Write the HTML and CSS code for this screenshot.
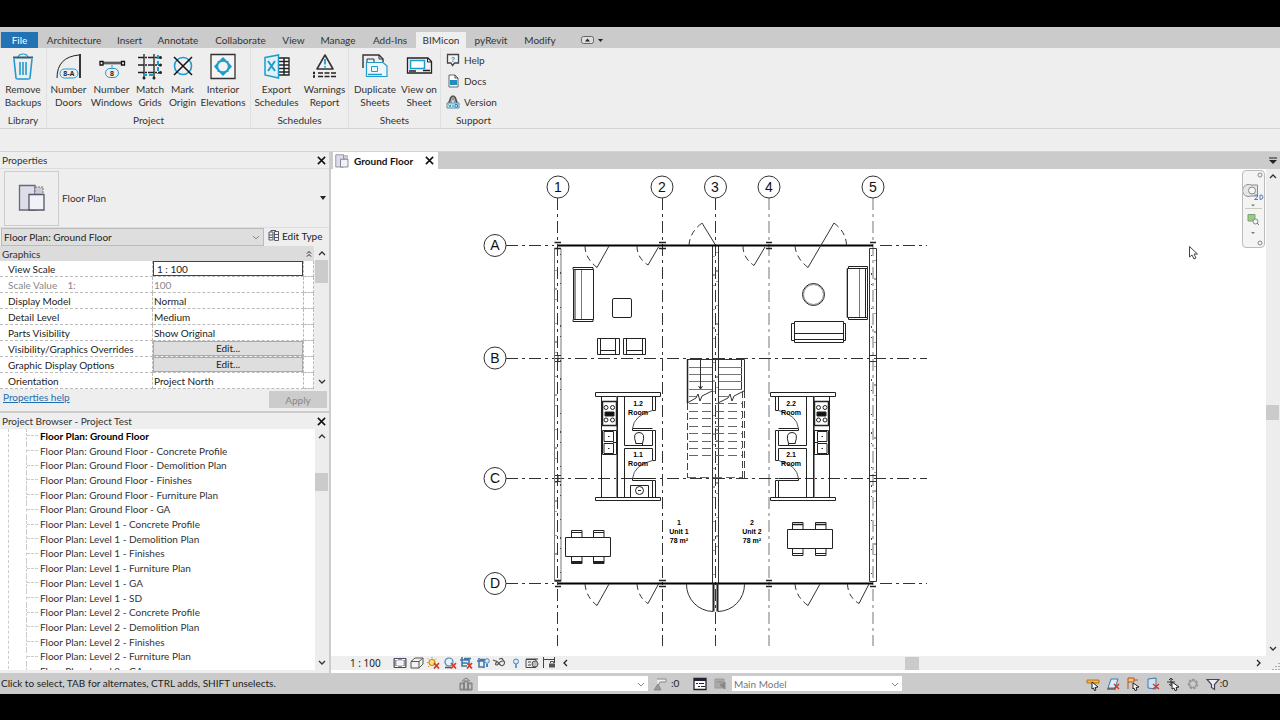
FILE: index.html
```html
<!DOCTYPE html>
<html lang="en">
<head>
<meta charset="utf-8">
<title>Floor Plan: Ground Floor</title>
<link rel="stylesheet" href="styles.css">
</head>
<body>
<svg class="defs" aria-hidden="true">
  <symbol id="up" viewBox="0 0 8 6"><path d="M1 5 4 2 7 5" fill="none" stroke="#333" stroke-width="1.3"/></symbol>
  <symbol id="down" viewBox="0 0 8 6"><path d="M1 1 4 4 7 1" fill="none" stroke="#333" stroke-width="1.3"/></symbol>
  <symbol id="chev" viewBox="0 0 8 6"><path d="M1 1 4 4 7 1" fill="none" stroke="#888"/></symbol>
  <symbol id="close" viewBox="0 0 10 10"><path d="M1 1 9 9M9 1 1 9" fill="none" stroke="#111" stroke-width="1.7"/></symbol>
  <symbol id="plan" viewBox="0 0 28 28"><path d="M1.500 1.500H17V26H1.500Z" fill="#dcdde8" stroke="#666a78" stroke-width="1.300"/><path d="M17 3H25V11H17Z" fill="#c9cbd8" stroke="#777" stroke-dasharray="2 1"/><path d="M11 10.500H26V26H11Z" fill="#f1f1f8" stroke="#555866" stroke-width="1.300"/></symbol>
</svg>
<div class="app">
  <nav class="tabs">
    <button class="tab file">File</button><button class="tab">Architecture</button><button class="tab">Insert</button><button class="tab">Annotate</button><button class="tab">Collaborate</button><button class="tab">View</button><button class="tab">Manage</button><button class="tab">Add-Ins</button><button class="tab active">BIMicon</button><button class="tab">pyRevit</button><button class="tab">Modify</button>
    <button class="tab" aria-label="Minimize ribbon"><svg width="24" height="8" viewBox="0 0 24 8"><rect x="1.500" y=".5" width="12" height="7" rx="2" fill="#ddd" stroke="#666"/><path d="M5 5.500 7.500 2.500 10 5.500Z" fill="#222"/><path d="M18 3H23L20.500 6Z" fill="#222"/></svg></button>
  </nav>
  <div class="ribbon">
    <section class="panel library">
      <div class="tools">
        <button class="tool"><svg viewBox="0 0 28 28"><g fill="none" stroke="#1e9bd0" stroke-width="1.600"><path d="M9 4Q10 1 14 1T19 4" stroke-width="1.200"/><path d="M5 6 7 25Q7 26 9 26H19Q21 26 21 25L23 6"/><path d="M11 9V22M14 9V22M17 9V22"/></g><path d="M4 4.500H24" stroke="#2b5f78" stroke-width="2"/></svg><span>Remove<br>Backups</span></button>
      </div>
      <h2>Library</h2>
    </section>
    <section class="panel project">
      <div class="tools">
        <button class="tool"><svg viewBox="0 0 28 28"><path d="M2 25Q2 4 24 2" fill="none" stroke="#222"/><path d="M25 1V25" stroke="#222" stroke-width="1.800"/><rect x="5" y="16" width="18" height="9" rx="4.500" fill="#eee" stroke="#1e9bd0"/><text x="14" y="23" class="badge">8-A</text></svg><span>Number<br>Doors</span></button>
        <button class="tool"><svg viewBox="0 0 28 28"><path d="M3 10H26" stroke="#222" stroke-width="2.500"/><path d="M5 10H24" stroke="#999"/><path d="M2 8.500H5V12H2ZM23.500 8.500H26.500V12H23.500Z" fill="#fff" stroke="#111" stroke-width="1.300"/><path d="M14 12V16" stroke="#1e9bd0"/><rect x="7.500" y="15.500" width="13" height="9" rx="4.500" fill="#eee" stroke="#1e9bd0"/><text x="14" y="22.500" class="badge">8</text></svg><span>Number<br>Windows</span></button>
        <button class="tool"><svg viewBox="0 0 28 28"><path d="M2 4.500H25M2 12H25M2 19.500H25" stroke="#222" stroke-width="1.300" stroke-dasharray="6 1 2 1"/><path d="M8 1V26M18 1V26" stroke="#222" stroke-width="1.300"/><path d="M22 2V21M7 22H19" stroke="#1e9bd0" stroke-width="2" stroke-dasharray="4 2"/><g fill="#222"><circle cx="24.500" cy="4.500" r="1.500"/><circle cx="24.500" cy="12" r="1.500"/><circle cx="24.500" cy="19.500" r="1.500"/><circle cx="8" cy="25" r="1.500"/><circle cx="18" cy="25" r="1.500"/></g></svg><span>Match<br>Grids</span></button>
        <button class="tool"><svg viewBox="0 0 28 28"><circle cx="14" cy="13" r="8.500" fill="none" stroke="#1e9bd0" stroke-width="1.600"/><path d="M5 4 23 22M23 4 5 22" stroke="#111" stroke-width="1.500"/></svg><span>Mark<br>Origin</span></button>
        <button class="tool"><svg viewBox="0 0 28 28"><path d="M2 1.500H26V25.500H2Z" fill="#f5f5f5" stroke="#333" stroke-width="1.300"/><path d="M14 4 18 8H19.500V9.500L23 13.500 19.500 17.500V19H18L14 23 10 19H8.500V17.500L5 13.500 8.500 9.500V8H10Z" fill="#1e9bd0"/><circle cx="14" cy="13.500" r="4.800" fill="#f2f2f2"/></svg><span>Interior<br>Elevations</span></button>
      </div>
      <h2>Project</h2>
    </section>
    <section class="panel schedules">
      <div class="tools">
        <button class="tool"><svg viewBox="0 0 28 28"><path d="M16 5H26V22H16" fill="#fff" stroke="#222" stroke-width="1.300"/><path d="M16 8.500H26M16 12H26M16 15.500H26M16 19H26M21 5V22" stroke="#222" stroke-width="1.500"/><path d="M2 4.500 15.500 2V25L2 22Z" fill="#e2f1f8" stroke="#1e9bd0" stroke-width="1.500"/><path d="M5 8 12 18M12 8 5 18" stroke="#1e9bd0" stroke-width="2"/></svg><span>Export<br>Schedules</span></button>
        <button class="tool"><svg viewBox="0 0 28 28"><path d="M14 2 22 16H6Z" fill="#f3f3f3" stroke="#333" stroke-width="1.600" stroke-linejoin="round"/><path d="M14 6V11.500M14 13V14.500" stroke="#1e9bd0" stroke-width="1.800"/><path d="M2 20H4M2 23.500H4" stroke="#222" stroke-width="2.500"/><path d="M7 20H26M7 23.500H26" stroke="#222" stroke-width="1.400" stroke-dasharray="5 1.500"/></svg><span>Warnings<br>Report</span></button>
      </div>
      <h2>Schedules</h2>
    </section>
    <section class="panel sheets">
      <div class="tools">
        <button class="tool"><svg viewBox="0 0 28 28"><path d="M2 15V2H18L22 6V9" fill="none" stroke="#333" stroke-width="1.400"/><path d="M18 2V6H22M6 9V6H13V9" fill="none" stroke="#333"/><path d="M5.500 9.500H22L26 13V23.500H5.500Z" fill="#edf7fb" stroke="#1e9bd0" stroke-width="1.200"/><path d="M10.500 13.500H16.500V18.500H10.500Z" fill="none" stroke="#1e9bd0"/><path d="M7 21.500H21" stroke="#1e9bd0" stroke-width="1.500"/></svg><span>Duplicate<br>Sheets</span></button>
        <button class="tool"><svg viewBox="0 0 28 28"><path d="M2.500 5H23L26.500 8.500V20H2.500Z" fill="#f2f2f2" stroke="#222" stroke-width="1.300"/><path d="M22.500 5V9H26.500" fill="none" stroke="#222"/><path d="M5.500 7.500H19.500V15.500H5.500Z" fill="#fff" stroke="#1e9bd0" stroke-width="1.500"/><path d="M4 18H11M18 17.500H25" stroke="#222" stroke-width="1.400"/></svg><span>View on<br>Sheet</span></button>
      </div>
      <h2>Sheets</h2>
    </section>
    <section class="panel support">
      <div class="links">
        <button class="mini"><svg viewBox="0 0 14 14"><path d="M1.500 1.500H12.500V10H8.500L6.500 12.500 5 10H1.500Z" fill="#f5f5f5" stroke="#444" stroke-width="1.300"/><text x="7" y="8.500" class="q">?</text></svg>Help</button>
        <button class="mini"><svg viewBox="0 0 14 14"><path d="M3 1H9L12 4V13H3Z" fill="#fff" stroke="#666"/><path d="M4 6H11V11H4Z" fill="#1e8fc0"/><path d="M9 1V4H12" fill="none" stroke="#444"/></svg>Docs</button>
        <button class="mini"><svg viewBox="0 0 14 14"><path d="M3 8 5 2.500Q7 0 9 2.500L11 8" fill="none" stroke="#555" stroke-width="2"/><path d="M5 8 7 3 9 8" fill="none" stroke="#888"/><path d="M1 8H13V13H1Z" fill="#dcebf2" stroke="#5c8ca3"/><path d="M2.500 9.500 4 12 5 9.500M7 9.500V12M9 9.500H11.500V12H9Z" fill="none" stroke="#1e8fc0"/></svg>Version</button>
      </div>
      <h2>Support</h2>
    </section>
  </div>
  <div class="options"></div>
  <main class="work">
    <aside class="side">
      <section class="props">
        <header class="bar"><h3>Properties</h3><button class="x" aria-label="Close Properties"><svg width="9" height="9"><use href="#close"/></svg></button></header>
        <button class="type"><span class="thumb"><svg width="28" height="28"><use href="#plan"/></svg></span><span class="name">Floor Plan</span><svg width="6" height="4"><path d="M0 0H6L3 4Z" fill="#222"/></svg></button>
        <div class="instance">
          <div class="combo"><select aria-label="View instance"><option>Floor Plan: Ground Floor</option></select><svg width="8" height="6"><use href="#chev"/></svg></div>
          <button class="edit"><svg width="12" height="12" viewBox="0 0 12 12"><path d="M1 2H5V10H1ZM1 5H5M1 7.500H5M6.500 1.500H10.500V10.500H6.500ZM6.500 4.500H10.500M6.500 7.500H10.500M3 2V.5H8" fill="#f4f4fa" stroke="#555866"/></svg>Edit Type</button>
        </div>
        <div class="scroller">
          <div class="grid">
            <div class="group">Graphics<svg width="6" height="8"><path d="M1 3.500 3 1.500 5 3.500M1 6.500 3 4.500 5 6.500" fill="none" stroke="#222"/></svg></div>
            <table>
              <tr><th><label for="scale">View Scale</label></th><td class="field"><input id="scale" value="1 : 100"></td><td></td></tr>
              <tr class="dim"><th>Scale Value &nbsp;&nbsp; 1:</th><td>100</td><td></td></tr>
              <tr><th>Display Model</th><td>Normal</td><td></td></tr>
              <tr><th>Detail Level</th><td>Medium</td><td></td></tr>
              <tr><th>Parts Visibility</th><td>Show Original</td><td></td></tr>
              <tr><th>Visibility/Graphics Overrides</th><td class="field"><button>Edit...</button></td><td></td></tr>
              <tr><th>Graphic Display Options</th><td class="field"><button>Edit...</button></td><td></td></tr>
              <tr><th>Orientation</th><td>Project North</td><td></td></tr>
            </table>
          </div>
          <div class="vscroll p"><button aria-label="Scroll up"><svg width="8" height="6"><use href="#up"/></svg></button><i class="before"></i><i class="knob"></i><i class="after"></i><button aria-label="Scroll down"><svg width="8" height="6"><use href="#down"/></svg></button></div>
        </div>
        <footer class="foot"><a href="#help">Properties help</a><button disabled>Apply</button></footer>
      </section>
      <section class="browser">
        <header class="bar"><h3>Project Browser - Project Test</h3><button class="x" aria-label="Close Project Browser"><svg width="9" height="9"><use href="#close"/></svg></button></header>
        <div class="scroller">
          <div class="tree">
            <ul>
              <li class="current">Floor Plan: Ground Floor</li>
              <li>Floor Plan: Ground Floor - Concrete Profile</li>
              <li>Floor Plan: Ground Floor - Demolition Plan</li>
              <li>Floor Plan: Ground Floor - Finishes</li>
              <li>Floor Plan: Ground Floor - Furniture Plan</li>
              <li>Floor Plan: Ground Floor - GA</li>
              <li>Floor Plan: Level 1 - Concrete Profile</li>
              <li>Floor Plan: Level 1 - Demolition Plan</li>
              <li>Floor Plan: Level 1 - Finishes</li>
              <li>Floor Plan: Level 1 - Furniture Plan</li>
              <li>Floor Plan: Level 1 - GA</li>
              <li>Floor Plan: Level 1 - SD</li>
              <li>Floor Plan: Level 2 - Concrete Profile</li>
              <li>Floor Plan: Level 2 - Demolition Plan</li>
              <li>Floor Plan: Level 2 - Finishes</li>
              <li>Floor Plan: Level 2 - Furniture Plan</li>
              <li>Floor Plan: Level 2 - GA</li>
            </ul>
          </div>
          <div class="vscroll b"><button aria-label="Scroll up"><svg width="8" height="6"><use href="#up"/></svg></button><i class="before"></i><i class="knob"></i><i class="after"></i><button aria-label="Scroll down"><svg width="8" height="6"><use href="#down"/></svg></button></div>
        </div>
      </section>
    </aside>
    <section class="view">
      <div class="docs">
        <div class="doc"><svg width="14" height="14"><use href="#plan"/></svg><span>Ground Floor</span><button class="x" aria-label="Close view"><svg width="9" height="9"><use href="#close"/></svg></button></div>
        <button class="more" aria-label="View list"><svg width="8" height="8"><path d="M0 1H8" stroke="#222"/><path d="M0 3H8L4 7Z" fill="#222"/></svg></button>
      </div>
      <div class="stage">
        <div class="canvas">
          <svg class="drawing" viewBox="331 169 935 487" role="img" aria-label="Ground floor plan">
            <defs>
              <g id="chair"><path d="M.5 7V.5H11V7M.5 2.500H11"/></g>
              <g id="core">
                <path d="M595.500 392.500H660.500V396.500H595.500ZM595.500 497.500H660.500V500.500H595.500Z"/>
                <path d="M601.500 396.500V497.500M617.500 396.500V497.500"/><path d="M616.500 396.500V497.500" stroke="#888"/>
                <path d="M602.500 401.500H616.500V425.500H602.500Z" stroke-width="1.500"/>
                <circle cx="606" cy="407.500" r="2"/><circle cx="612.500" cy="407.500" r="2"/><circle cx="606" cy="420" r="2"/><circle cx="612.500" cy="420" r="2"/>
                <path d="M605 412H614V416H605Z" fill="#111"/>
                <path d="M602.500 430.500H616.500V454.500H602.500ZM604 431.500H613.500V441.500H604ZM604 443.500H613.500V453.500H604Z"/><path d="M608 436.500H609.500M608 448.500H609.500M613 442.500H616"/>
                <path d="M624.500 396.500V445.500H652.500V430.500H655.500V460.500H652.500V448.500H624.500V497.500M652.500 396.500V410.500H655.500V396.500M652.500 497.500V480.500H655.500V497.500"/>
                <path d="M652.500 428.500H632.500V430.500H652.500M652.500 478.500H632.500V480.500H652.500"/>
                <path d="M632.500 428.500Q634 415 652.500 410.500M632.500 478.500Q634 465 652.500 460.500" stroke="#555"/>
                <path d="M636 443.500Q632 432.500 639 432.500T642.500 443.500ZM635.500 443.500H642.500V445.500"/>
              </g>
            </defs>
            <g class="grid-lines">
              <path d="M557.500 198V646M662.500 198V646M715.500 198V646"/><path d="M769 198V646M873 198V646" class="soft"/>
              <path d="M506 245.500H554M880 245.500H927M506 358.500H927M506 478.500H927M506 583.500H554M880 583.500H927"/>
            </g>
            <g class="bubbles">
              <circle cx="558" cy="187" r="11"/><circle cx="662" cy="187" r="11"/><circle cx="715.500" cy="187" r="11"/><circle cx="769" cy="187" r="11"/><circle cx="873" cy="187" r="11"/>
              <circle cx="495" cy="245.500" r="11"/><circle cx="495" cy="358" r="11"/><circle cx="495" cy="478.500" r="11"/><circle cx="495" cy="583.500" r="11"/>
            </g>
            <g class="tags">
              <text x="558" y="192">1</text><text x="662" y="192">2</text><text x="715" y="192">3</text><text x="769" y="192">4</text><text x="873" y="192">5</text>
              <text x="495" y="250">A</text><text x="495" y="363">B</text><text x="495" y="483">C</text><text x="495" y="588">D</text>
            </g>
            <g class="lines">
              <g stroke="#777"><path d="M554.500 248.500H561V581.500H554.500Z"/></g>
              <path d="M712.500 246V583M718.500 246V583M869.500 248.500H876.500V581.500H869.500Z" stroke="#333"/>
              <path d="M556 270V560M560.500 254V575M714 256V575M717 252V570M871.500 255V575M875 260V570" stroke="#444" stroke-dasharray="1 17 2 9 1 23"/>
              <path d="M558 245.500H873M558 583.500H873" stroke="#000" stroke-width="2"/>
              <path d="M554.500 242.500H561M554.500 248.500H561M659 242.500H666M659 248.500H666M766 242.500H772M766 248.500H772M870 242.500H876M555 586.500H561M659 586.500H666M766 586.500H772M870 586.500H876M555 580.500H561M659 580.500H666M766 580.500H772" stroke-width="1.300"/>
              <path d="M555 355.500H561M555 361.500H561M558 355V362M555 475.500H561M555 481.500H561M558 475V482M870 355.500H876M870 361.500H876M870 475.500H876M870 481.500H876" stroke="#333"/>
              <g stroke="#333"><path d="M597 267.500 609 246M648 265 658.500 247M702 223 715.500 245M754 265.500 765 247M808 267.500 834 223M597 605.500 609 584M648 603.500 658.500 584M808 605.500 820 584M859 603.500 869 584"/>
              <path d="M585 246Q585 258 597 267.500M637 246Q637 258 648 265M689 245Q690 232 702 223M743 246Q743 258 754 265.500M795 246Q796 258 808 267.500M834 223Q846 232 846.500 245M585 584Q586 597 597 605.500M637 584Q638 597 648 603.500M795 584Q796 597 808 605.500M847.500 584Q848 597 859 603.500" stroke-dasharray="6 4"/>
              <path d="M686.500 584A27 27 0 0 0 713 611.500M744.500 584A27 27 0 0 1 718 611.500"/></g>
              <path d="M713.500 583V611.500M717.500 583V611.500" stroke-width="2"/>
              <path d="M573.500 269.500H593.500V319.500H573.500ZM573 269.500V267.500H593V269.500M573 319.500V321.500H593V319.500M575 270V319"/><path d="M581.500 270V319M847 268.500V317.500" stroke="#777"/>
              <rect x="612.500" y="298.500" width="19" height="19" rx="1.500"/>
              <path d="M597.500 338.500H619.500V354.500H597.500ZM600.500 338.500V354M615.500 338.500V354M600.500 350.500H615.500M623.500 338.500H645.500V354.500H623.500ZM626.500 338.500V354M642.500 338.500V354M626.500 350.500H642.500"/>
              <circle cx="813.500" cy="294.500" r="11"/><circle cx="813.500" cy="294.500" r="10" stroke="#888"/>
              <path d="M847.500 268.500H867.500V317.500H847.500ZM848.500 268.500V266.500H867.500V268.500M848.500 317.500V319.500H867.500V317.500M865.500 269V317"/><path d="M859.500 269V317" stroke="#777"/>
              <path d="M794.500 321.500H843.500V342.500H794.500ZM794.500 323.500H791.500V340.500H794.500M843.500 323.500H845.500V340.500H843.500M794 333.500H843M794 339.500H843"/>
              <path d="M565.500 537.500H610.500V556.500H565.500ZM787.500 529.500H832.500V548.500H787.500Z"/>
              <use href="#chair" x="571" y="530"/><use href="#chair" x="593" y="530"/><use href="#chair" x="792" y="522"/><use href="#chair" x="815" y="522"/>
              <use href="#chair" transform="translate(571 564) scale(1 -1)"/><use href="#chair" transform="translate(593 564) scale(1 -1)"/><use href="#chair" transform="translate(792 556) scale(1 -1)"/><use href="#chair" transform="translate(815 556) scale(1 -1)"/>
              <path d="M571 562.500H582M593 562.500H604M792 524.500H803M815 524.500H826" stroke-width="1.500"/>
              <path d="M687.500 403V359.500H744.500V391M741.500 359.500V390" stroke="#333"/><path d="M687.500 359V403" stroke-width="1.500"/>
              <path d="M689 367.500H712M689 374.500H712M689 381.500H712M689 389.500H712M689 396.500H697M719 367.500H742M719 374.500H742M719 381.500H742M719 389.500H742M719 396.500H728" stroke="#777"/>
              <path d="M688 402.500 696 398 698 394 700 401 702 396 712 391M719 402.500 728 398 730 394 732 401 734 396 744 391M700.500 360V389M698.500 386 700.500 389 702.500 386" stroke="#333"/>
              <path d="M689 403.500H742M689 411.500H742M689 418.500H742M689 426.500H742M689 433.500H742M689 441.500H742M689 448.500H742M689 455.500H742M687 477.500H742" stroke="#666" stroke-dasharray="9 4"/>
              <path d="M687.500 403V478M742.500 391V478M744.500 391V478" stroke="#444" stroke-dasharray="7 3"/>
              <use href="#core"/><use href="#core" transform="translate(1431 0) scale(-1 1)"/>
              <path d="M630.500 485.500H648.500V497.500H630.500Z"/><circle cx="639.500" cy="490.500" r="4"/><path d="M638 490.500H641"/>
            </g>
            <g class="rooms">
              <text x="638" y="406">1.2</text><text x="638" y="415">Room</text><text x="638" y="457">1.1</text><text x="638" y="466">Room</text>
              <text x="791" y="406">2.2</text><text x="791" y="415">Room</text><text x="791" y="457">2.1</text><text x="791" y="466">Room</text>
              <text x="679" y="525">1</text><text x="679" y="534">Unit 1</text><text x="679" y="543">78 m²</text>
              <text x="752" y="525">2</text><text x="752" y="534">Unit 2</text><text x="752" y="543">78 m²</text>
            </g>
            <path d="M1189.500 246.500V257L1192 255 1194 259 1196 258 1194 254H1197.500Z" fill="#fff" stroke="#444"/>
          </svg>
          <div class="navbar">
            <svg width="21" height="76" viewBox="1 1 21 76"><g fill="none" stroke="#8a8a8a"><circle cx="18" cy="5" r="2"/><circle cx="18" cy="73" r="2"/><path d="M15.500 26H9A6 6 0 1 1 9 15H15.500Z" fill="#e4e6ec"/><circle cx="10" cy="20.500" r="3.500" fill="#f5f5f5"/></g><path d="M3 38.500H20" stroke="#ccb"/><path d="M12.500 25H15.500V27L12.500 29.500H16M18 25V29.500Q21 29.500 21 27T18 25" fill="none" stroke="#5b7fb0"/><path d="M9 34.500H13L11 36.500ZM9 62H13L11 64Z" fill="#777"/><path d="M6 44.500H13V51H6Z" fill="#9cc78d" stroke="#7ba66f"/><circle cx="13.500" cy="51.500" r="2.500" fill="#f4f4f4" stroke="#888"/><path d="M15 53 17 55" stroke="#777"/></svg>
          </div>
        </div>
        <div class="vscroll v"><button aria-label="Scroll up"><svg width="8" height="6"><use href="#up"/></svg></button><i class="before"></i><i class="knob"></i><i class="after"></i><button aria-label="Scroll down"><svg width="8" height="6"><use href="#down"/></svg></button></div>
      </div>
      <div class="controls">
        <button class="scale">1 : 100</button>
        <div class="modes">
        <button aria-label="Detail level"><svg viewBox="0 0 14 12"><path d="M1 1.500H13V10.500H1Z" fill="#9a9a9a" stroke="#444a66"/><path d="M4 4H10V8H4ZM2 2.500H5M9 2.500H12M2 9.500H5M9 9.500H12" fill="#eee" stroke="#fff"/></svg></button>
        <button aria-label="Visual style"><svg viewBox="0 0 14 12"><path d="M1 4.500H9V11H1ZM1 4.500 5 1H13V7L9 11M9 4.500 13 1" fill="#f2f2f2" stroke="#555"/></svg></button>
        <button aria-label="Sun path"><svg viewBox="0 0 14 12"><circle cx="6" cy="5.500" r="3" fill="#ffe27a" stroke="#c98a1e" stroke-width="1.200"/><path d="M6 0V1.500M1 5.500H2M2 1.500 3 2.500M10 1.500 9 2.500M2 10 3 9" stroke="#c98a1e"/><path d="M8 6 13 11.500M13 6 8 11.500" stroke="#d03a2a" stroke-width="1.700"/></svg></button>
        <button aria-label="Shadows"><svg viewBox="0 0 14 12"><circle cx="6" cy="5" r="4" fill="#e6f0f8" stroke="#4a84b8" stroke-width="1.200"/><path d="M2 10.500H8" stroke="#555" stroke-width="1.500"/><path d="M8 6 13 11.500M13 6 8 11.500" stroke="#d03a2a" stroke-width="1.700"/></svg></button>
        <button aria-label="Crop view"><svg viewBox="0 0 14 12"><path d="M3 0V9H8M1 3H10V8M5 1.500H12M3 6H8" fill="none" stroke="#3f76a8" stroke-width="1.600"/><path d="M8 6 13 11.500M13 6 8 11.500" stroke="#d03a2a" stroke-width="1.700"/></svg></button>
        <button aria-label="Show crop region"><svg viewBox="0 0 14 12"><path d="M3 1V10H8M1 4H8V11M4 2.500H9" fill="none" stroke="#3f76a8" stroke-width="1.500"/><circle cx="11" cy="4" r="2.300" fill="#d8ecfa" stroke="#4a84b8"/><path d="M11 7V10" stroke="#4a84b8" stroke-width="2"/></svg></button>
        <button aria-label="Temporary hide"><svg viewBox="0 0 14 12"><path d="M1 3 5 4.500M5 8Q2 8 5 4.500 8 6 5 8M7 6 9 8.500Q12 9 12.500 6T9 4.500 8.500 8M12.500 5 10 1.500 7 2" fill="none" stroke="#555" stroke-width="1.200"/></svg></button>
        <button aria-label="Reveal hidden"><svg viewBox="0 0 14 12"><circle cx="7" cy="4.500" r="2.500" fill="#d8ecfa" stroke="#4a84b8"/><path d="M6 8H8M6 10H8" stroke="#4a84b8" stroke-width="1.500"/></svg></button>
        <button aria-label="Temporary view properties"><svg viewBox="0 0 14 12"><path d="M1 2.500H11V10.500H1ZM1 2H13" fill="#eee" stroke="#444"/><path d="M3 5H6M3 8H6" stroke="#444"/><circle cx="10" cy="7" r="3" fill="#bbb" stroke="#555"/></svg></button>
        <button aria-label="Reveal constraints"><svg viewBox="0 0 14 12"><path d="M1 2.500H13M1.500 0V11M12.500 0V6" stroke="#444"/><path d="M7 6.500H13V10.500H7Z" fill="#555"/><path d="M8.500 6V4.500H11.500V6" fill="none" stroke="#555"/></svg></button>
        <button aria-label="Scroll left"><svg viewBox="0 0 14 12"><path d="M9 3 6 6 9 9" fill="none" stroke="#222" stroke-width="1.300"/></svg></button>
        </div>
        <div class="hscroll"><i class="before"></i><i class="knob"></i><i class="after"></i></div>
        <button aria-label="Scroll right"><svg viewBox="0 0 14 12"><path d="M5 3 8 6 5 9" fill="none" stroke="#222" stroke-width="1.300"/></svg></button>
        <svg class="grip" viewBox="0 0 8 8"><path d="M7 1V2M7 4V5M7 7V8M4 4V5M4 7V8M1 7V8" stroke="#999" stroke-width="1.500"/></svg>
      </div>
    </section>
  </main>
  <footer class="status">
    <p>Click to select, TAB for alternates, CTRL adds, SHIFT unselects.</p>
    <svg class="ic" viewBox="0 0 14 14"><path d="M1 6H5V13H1ZM5 4H9V13H5ZM9 6H13V13H9Z" fill="#aaa" stroke="#777"/><path d="M3 4 7 1 11 4" fill="none" stroke="#777"/><path d="M3 8V11M7 6V11M11 8V11" stroke="#ddd"/></svg>
    <div class="combo"><select aria-label="Active workset"><option></option></select><svg width="8" height="6"><use href="#chev"/></svg></div>
    <svg class="ic" viewBox="0 0 14 14"><path d="M4 2H13V5H7L5 9" fill="#eee" stroke="#888"/><path d="M1 13 5 7 8 13Z" fill="#999" stroke="#888"/></svg>
    <span class="zero">:0</span>
    <svg class="ic" viewBox="0 0 14 14"><path d="M1 1.500H13V12.500H1Z" fill="#fff" stroke="#223" stroke-width="1.300"/><path d="M1 3H13" stroke="#223" stroke-width="2"/><path d="M3 6.500H5M6 6.500H11M5 9.500H7M8 9.500H12" stroke="#223"/></svg>
    <svg class="ic s4" viewBox="0 0 14 14"><path d="M2 2H11V11H2Z" fill="#aaa" stroke="#999"/><path d="M4 5H9M7 8 12 12V5Z" fill="#888" stroke="#888"/></svg>
    <div class="combo"><select aria-label="Design option"><option>Main Model</option></select><svg width="8" height="6"><use href="#chev"/></svg></div>
    <div class="sel">
      <svg class="ic" viewBox="0 0 14 14"><path d="M1 3H13V6H1Z" fill="#f3b73a" stroke="#b87412"/><path d="M6 5 12 10 9 10.500 10 13 8.500 13.500 7.500 11 6 12Z" fill="#fff" stroke="#222"/></svg>
      <svg class="ic" viewBox="0 0 14 14"><path d="M2 11 5 2H12L9 11Z" fill="#dbeaf5" stroke="#3d78a8"/><path d="M1 12H10" stroke="#333"/><path d="M8 7 13 12M13 7 8 12" stroke="#d03a2a" stroke-width="1.500"/></svg>
      <svg class="ic" viewBox="0 0 14 14"><path d="M2 1H8V5H2ZM2 5V12M8 3H12" fill="#f6c27a" stroke="#b0571a"/><path d="M7 6 13 10 10 10.500 11 13 9 13.500 8 11 7 12Z" fill="#fff" stroke="#222"/></svg>
      <svg class="ic" viewBox="0 0 14 14"><path d="M2 2 10 1V12L2 11Z" fill="#cfe3f2" stroke="#3d78a8"/><path d="M7 7 13 12M13 7 7 12" stroke="#d03a2a" stroke-width="1.500"/></svg>
      <svg class="ic" viewBox="0 0 14 14"><path d="M5 1V9M1 5H9M3 3 5 1 7 3M3 7 5 9" fill="none" stroke="#333"/><path d="M6 5 13 10 10 10.500 11 13 9 13.500 8 11 6 12Z" fill="#fff" stroke="#222"/></svg>
      <svg class="ic" viewBox="0 0 14 14"><circle cx="7" cy="7" r="4" fill="#ccc" stroke="#999" stroke-width="2.500" stroke-dasharray="2.500 1"/><circle cx="7" cy="7" r="3.500" fill="none" stroke="#999"/></svg>
      <svg class="ic" viewBox="0 0 14 14"><path d="M1 2.500H13L8.500 7.500V12.500L5.500 10.500V7.500Z" fill="#e9eef4" stroke="#445" stroke-width="1.200"/></svg>
    </div>
    <span>:0</span>
  </footer>
</div>
</body>
</html>
```
FILE: styles.css
```css
:root {
  --ui: Lato, "Open Sans", sans-serif;
  --chrome: #eeeeee;
  --bar: #cbcbcb;
}
* { box-sizing: border-box; }
body {
  margin: 0;
  min-height: 100vh;
  padding: 27px 0;
  background: #000;
  color: #333;
  font: 10px/14px var(--ui);
  display: flex;
}
button, input, select {
  font: inherit;
  color: inherit;
  border: 0;
  margin: 0;
  padding: 0;
  background: none;
  border-radius: 0;
  appearance: none;
}
h2, h3, p, ul { margin: 0; padding: 0; font: inherit; list-style: none; }
svg { display: block; flex: none; }
.defs { position: absolute; width: 0; height: 0; }
.app {
  flex: 1;
  min-width: 0;
  display: flex;
  flex-direction: column;
  background: var(--chrome);
}

.tabs {
  display: grid;
  grid-template-columns: 38px 70px 41px 56px 69px 37px 52px 52px 50px 50px 48px 56px;
  height: 21px;
  padding: 5px 0 0 1px;
  background: var(--bar);
}
.tab { display: flex; align-items: center; justify-content: center; padding-bottom: 1px; }
.tab.file { background: #2372b3; color: #fff; margin-right: 1px; }
.tab.active { background: #efefef; }

.ribbon { display: flex; height: 81px; border-bottom: 1px solid #d2d2d2; }
.panel {
  display: flex;
  flex-direction: column;
  border-right: 1px solid #e0e0e0;
}
.panel h2 { text-align: center; margin-top: auto; height: 15px; }
.tools { display: grid; padding-top: 5px; }
.library { width: 47px; }
.project { width: 204px; }
.project .tools { grid-template-columns: 43px 43px 34px 31px 50px; }
.schedules { width: 98px; }
.schedules .tools { grid-template-columns: 51px 45px; }
.sheets { width: 92px; }
.sheets .tools { grid-template-columns: 52px 36px; }
.support { width: 65px; border: 0; }
.tool {
  display: flex;
  flex-direction: column;
  align-items: center;
  line-height: 13px;
  white-space: nowrap;
}
.tool svg { width: 28px; height: 28px; margin-bottom: 2px; }
.badge, .q { font: bold 7px "Liberation Sans", sans-serif; text-anchor: middle; fill: #222; }
.q { fill: #1e8fc0; }
.links { display: flex; flex-direction: column; gap: 7px; padding: 5px 0 0 5px; }
.mini { display: flex; align-items: center; gap: 4px; height: 14px; }
.mini svg { width: 14px; height: 14px; }

.options { height: 23px; border-bottom: 1px solid #d2d2d2; }

.work { flex: 1; min-height: 0; display: flex; }
.side {
  width: 331px;
  display: flex;
  flex-direction: column;
  border-right: 2px solid #cdcdcd;
  min-height: 0;
}
.bar { display: flex; align-items: center; height: 16px; padding: 0 3px 0 2px; }
.bar h3 { flex: 1; }
.x { display: grid; place-items: center; width: 10px; height: 12px; }
.type {
  width: 100%;
  height: 60px;
  display: flex;
  align-items: center;
  padding: 0 3px 0 4px;
  border: 1px solid #ddd;
  border-width: 1px 0;
  text-align: left;
}
.type .thumb {
  width: 55px;
  height: 55px;
  display: grid;
  place-items: center;
  border: 1px solid #ccc;
}
.type .name { flex: 1; padding-left: 3px; }
.instance { display: flex; gap: 4px; height: 18px; padding-left: 1px; }
.combo { position: relative; display: flex; }
.combo select { width: 100%; height: 100%; color: #222; }
.combo svg { position: absolute; right: 3px; top: 6px; pointer-events: none; }
.instance .combo { flex: 1; border: 1px solid #bbb; background: #dedede; }
.instance select { padding-left: 2px; }
.edit { width: 61px; display: flex; align-items: center; gap: 2px; color: #222; padding-bottom: 2px; }

.scroller { display: flex; flex: 1; min-height: 0; }
.grid { flex: 1; background: #fff; margin-right: 1px; }
.group {
  display: flex;
  justify-content: space-between;
  align-items: center;
  height: 15px;
  padding: 0 2px;
  background: #dcdcdc;
}
table { width: 100%; table-layout: fixed; border-collapse: separate; border-spacing: 0; color: #222; }
th, td {
  height: 16px;
  padding: 0 0 0 1px;
  font-weight: normal;
  text-align: left;
  line-height: 14px;
  border-bottom: 1px dashed #bbb;
  border-right: 1px dashed #bbb;
}
th { width: 153px; padding-left: 8px; }
td:last-child { width: 10px; }
.dim { color: #888; }
td.field { padding: 0; }
td input { display: block; width: 100%; height: 15px; padding: 0 3px; border: 1px solid #444; background: #fff; }
td button { display: block; width: 100%; height: 15px; background: #dedede; border: 1px solid #aaa; text-align: center; line-height: 13px; }
.foot { display: flex; justify-content: space-between; align-items: flex-start; height: 22px; padding: 1px 2px 0 3px; }
.foot a { color: #1f6db0; }
.foot button { width: 58px; height: 17px; margin-top: 1px; background: #ccc; color: #888; }

.vscroll { width: 14px; display: flex; flex-direction: column; background: #ededed; }
.vscroll button { height: 14px; display: grid; place-items: center; }
.knob { background: #cbcbcb; }
.vscroll .knob { width: 13px; }
.p .knob { flex: 0 0 23px; }
.p .after { flex: 1; }
.b .before { flex: 30; }
.b .knob { flex: 0 0 18px; }
.b .after { flex: 164; }
.v .before { flex: 222; }
.v .knob { flex: 0 0 15px; }
.v .after { flex: 222; }

.browser { flex: 1; min-height: 0; display: flex; flex-direction: column; border-top: 2px solid #ccc; padding-bottom: 3px; }
.tree {
  flex: 1;
  overflow: hidden;
  background: #fff;
}
.tree ul {
  height: calc(100% + 9px);
  display: flex;
  flex-direction: column;
  margin-left: 8px;
  padding-left: 17px;
  border-left: 1px dashed #ccc;
}
.tree li {
  flex: 1 0 0;
  display: flex;
  align-items: center;
  gap: 2px;
  border-left: 1px dashed #ccc;
  line-height: 14px;
  min-height: 0;
  padding-bottom: 1px;
}
.tree li::before { content: ""; width: 11px; border-top: 1px dashed #ccc; }
.tree .current { font-weight: bold; color: #000; }

.view { flex: 1; min-width: 0; display: flex; flex-direction: column; background: #fff; }
.docs { display: flex; justify-content: space-between; height: 17px; background: var(--bar); padding-left: 2px; }
.doc { display: flex; align-items: center; width: 105px; padding: 0 4px 0 2px; gap: 5px; background: #fff; color: #111; font-weight: bold; }
.doc span { flex: 1; }
.more { width: 14px; display: grid; place-items: center; }
.stage { flex: 1; min-height: 0; display: flex; }
.canvas { position: relative; flex: 1; min-width: 0; }
.drawing { width: 100%; height: 100%; }
.navbar {
  position: absolute;
  top: 1px;
  right: 1px;
  border: 1px solid #bbb;
  border-radius: 4px;
  background: #f4f4f4;
}
.lines { fill: none; stroke: #222; }
.grid-lines { fill: none; stroke: #333; stroke-dasharray: 12 4 3 4; }
.grid-lines .soft { stroke: #777; }
.bubbles { fill: #fff; stroke: #333; }
.tags { font: 14px "Liberation Sans", sans-serif; text-anchor: middle; fill: #111; }
.rooms { font: bold 7px "Liberation Sans", sans-serif; text-anchor: middle; fill: #000; }

.controls { display: flex; align-items: center; height: 14px; margin-bottom: 3px; background: #efefef; padding-left: 14px; }
.controls button svg { width: 14px; height: 12px; }
.controls .scale { width: 48px; font-family: "Noto Sans", sans-serif; color: #222; text-align: left; padding-left: 5px; }
.modes { display: flex; justify-content: space-between; width: 179px; }
.hscroll { flex: 1; height: 13px; display: flex; }
.hscroll .before { flex: 333; }
.hscroll .knob { flex: 0 0 14px; }
.hscroll .after { flex: 333; }
.controls .grip { width: 8px; height: 8px; margin-left: 6px; align-self: flex-end; }

.status { display: flex; align-items: center; height: 21px; background: var(--bar); color: #222; padding-right: 52px; }
.status p, .status span { padding-bottom: 2px; }
.status p { width: 459px; padding-left: 1px; }
.ic { width: 14px; height: 14px; }
.status .combo { width: 170px; height: 15px; margin: 0 5px; background: #fff; }
.status select { padding-left: 2px; color: #777; }
.zero { width: 26px; padding-left: 4px; }
.s4 { margin-left: 6px; }
.sel { display: flex; gap: 6px; margin-left: auto; }
```
